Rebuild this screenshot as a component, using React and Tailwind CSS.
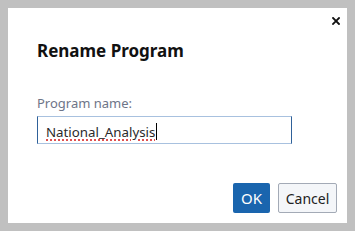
export default function App() {
  return (
    <div className="h-[231px] w-[355px] bg-[#c0c0c0] p-2" style={{ fontFamily: '"Noto Sans", "Open Sans", sans-serif' }}>
      <div className="flex h-full flex-col bg-white">
        <div className="flex justify-end pr-[7px] pt-[9px]">
          <svg width="8" height="8" viewBox="0 0 8 8" className="block">
            <path d="M1 1L7 7M7 1L1 7" stroke="#111" strokeWidth="1.8" strokeLinecap="square" />
          </svg>
        </div>
        <div className="px-[29px]">
          <h1 className="mt-[14px] text-[17px] font-bold leading-[23px] text-[#111]">Rename Program</h1>
          <label className="mt-[32px] block text-[13px] leading-[18px] text-[#6e7588]">Program name:</label>
          <div className="mt-[4px] flex h-[28px] w-[255px] items-center border-x border-y border-x-[#2f6199] border-y-[#a8c1df] pl-[8px]">
            <span className="relative text-[13.3px] leading-[18px] text-[#2a2a2a]">
              <span className="underline decoration-[#e05050] decoration-dotted decoration-2 underline-offset-[3px]">National_Analysis</span>
              <span className="ml-[1px] inline-block h-[17px] w-px translate-y-[3px] bg-black align-baseline"></span>
            </span>
          </div>
        </div>
        <div className="mt-auto flex justify-end gap-[8px] pb-[10px] pr-[10px]">
          <button className="h-[30px] w-[37px] rounded-[2px] bg-[#1a65ae] text-[15px] text-white">OK</button>
          <button className="h-[30px] w-[59px] rounded-[2px] border border-[#a3aab6] bg-[#f4f6f9] text-[14px] text-[#222]">Cancel</button>
        </div>
      </div>
    </div>
  )
}
